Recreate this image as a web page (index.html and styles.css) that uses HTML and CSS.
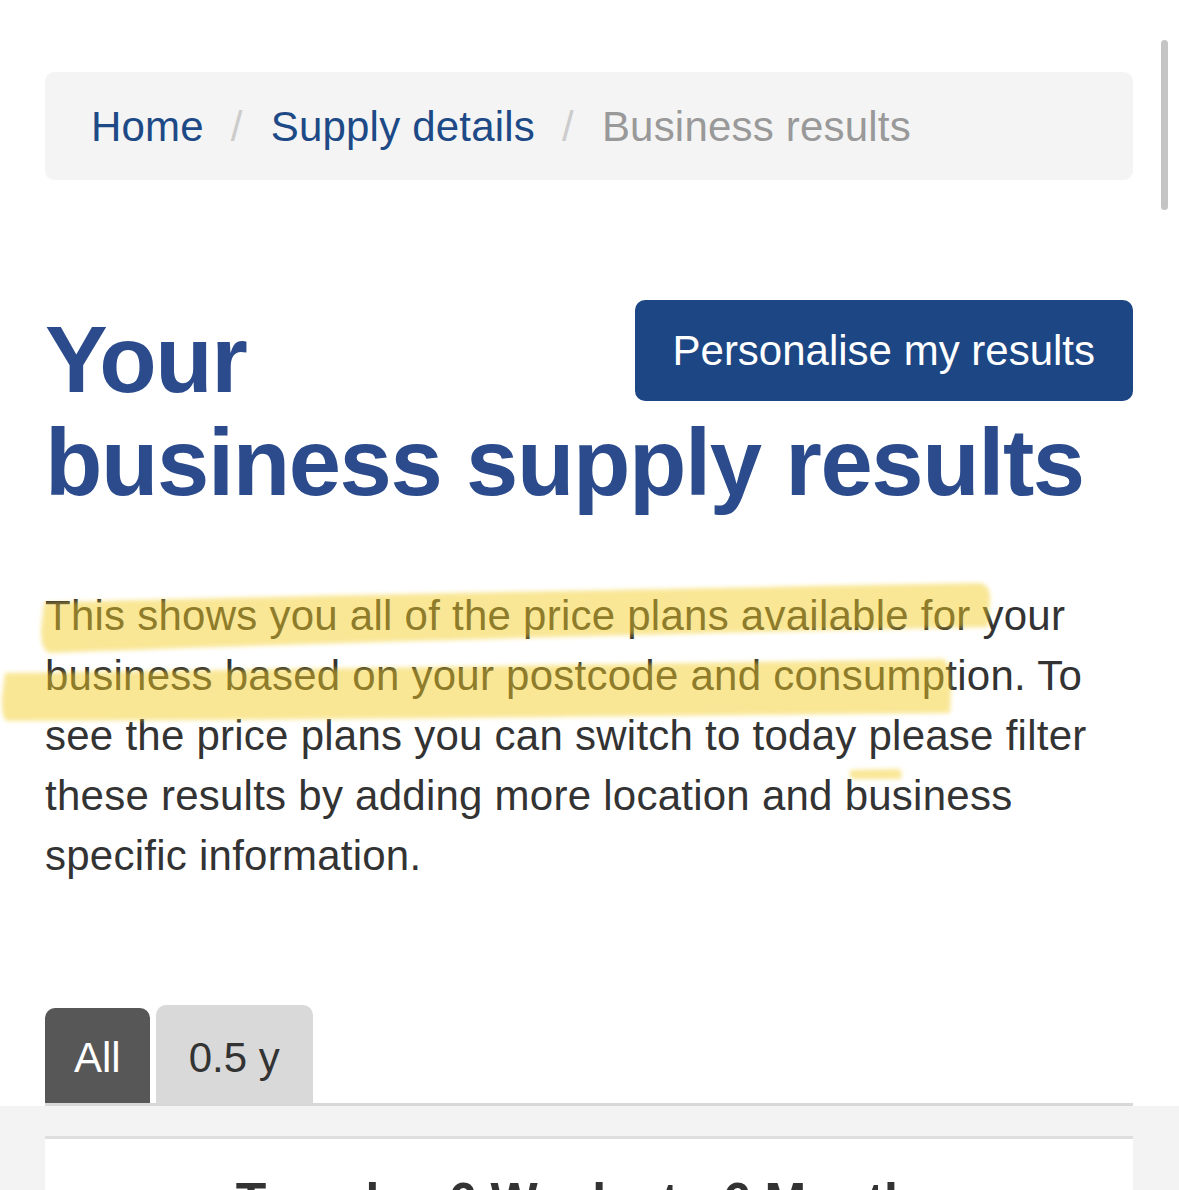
FILE: index.html
```html
<!DOCTYPE html>
<html>
<head>
    <title>Business results</title>
    <link rel="stylesheet" href="styles.css">
</head>
<body>
    <div class="scrollbar"></div>

    <svg class="marker" width="1179" height="900" viewBox="0 0 1179 900">
        <defs>
            <filter id="soft" x="-5%" y="-20%" width="110%" height="140%">
                <feGaussianBlur stdDeviation="2"/>
            </filter>
        </defs>
        <g filter="url(#soft)">
            <path d="M44,603 C220,597 600,590 980,583 Q991,585 990,601 L988,627 C700,633 300,643 50,653 Q41,651 41,630 Z"/>
            <path d="M5,673 C300,669 700,663 943,659 Q952,663 951,690 L950,713 C650,716 300,720 7,721 Q1,718 2,697 Z"/>
            <path d="M851,770 L899,769 Q904,774 900,779 L853,779 Q847,775 851,770 Z"/>
        </g>
    </svg>

    <main class="container">
        <nav class="breadcrumb">
            <a href="#">Home</a>
            <span class="sep">/</span>
            <a href="#">Supply details</a>
            <span class="sep">/</span>
            <span class="current">Business results</span>
        </nav>

        <div class="page-head">
            <a class="btn" href="#">Personalise my results</a>
            <h1>Your business supply results</h1>
        </div>

        <p class="intro">This shows you all of the price plans available for your business based on your postcode and consumption. To see the price plans you can switch to today please filter these results by adding more location and business specific information.</p>

        <ul class="tabs">
            <li class="tab tab-active">All</li>
            <li class="tab tab-muted">0.5 y</li>
        </ul>
    </main>

    <section class="results">
        <div class="container">
            <div class="card">
                <h2>Tuesday 6 Weeks to 6 Months</h2>
            </div>
        </div>
    </section>
</body>
</html>
```

FILE: styles.css
```css
html, body {
    margin: 0;
    overflow: hidden;
}

body {
    font-family: "Liberation Sans", Arial, sans-serif;
    background-color: #fff;
    color: #333;
    position: relative;
}

.container {
    padding: 0 46px 0 45px;
}

/* highlighter strokes drawn over the intro text */
.marker {
    position: absolute;
    top: 0;
    left: 0;
    z-index: 2;
    pointer-events: none;
    fill: rgba(242, 204, 32, 0.48);
}

.scrollbar {
    position: fixed;
    top: 40px;
    right: 11px;
    width: 7px;
    height: 170px;
    background-color: #c4c4c4;
    border-radius: 4px;
    z-index: 3;
}

.breadcrumb {
    display: flex;
    margin-top: 72px;
    padding: 25px 46px 23px;
    background-color: #f4f4f4;
    border-radius: 9px;
    font-size: 42px;
    line-height: 60px;
    letter-spacing: 0.2px;
}

.breadcrumb a {
    color: #1d4a86;
    text-decoration: none;
}

.breadcrumb .sep {
    color: #ccc;
    padding: 0 28px 0 27px;
}

.breadcrumb .current {
    color: #999;
}

.page-head {
    display: flow-root;
    margin-top: 120px;
}

.btn {
    float: right;
    margin-left: 20px;
    padding: 20px 38px;
    background-color: #1c4684;
    color: #fff;
    font-size: 42px;
    line-height: 61px;
    border-radius: 10px;
    text-decoration: none;
}

h1 {
    margin: 8px 0 0;
    font-size: 94px;
    line-height: 103px;
    font-weight: bold;
    letter-spacing: -1.4px;
    color: #2b4b8c;
}

.intro {
    margin: 72px 0 0;
    font-size: 42px;
    line-height: 60px;
    letter-spacing: 0.25px;
    color: #333;
}

.tabs {
    display: flex;
    align-items: flex-end;
    gap: 6px;
    margin: 119px 0 0;
    padding: 0;
    list-style: none;
    border-bottom: 3px solid #d8d8d8;
}

.tab {
    font-size: 42px;
    line-height: 60px;
    border-radius: 10px 10px 0 0;
}

.tab-active {
    padding: 20px 29px 15px;
    background-color: #575757;
    color: #fff;
}

.tab-muted {
    padding: 23px 33px 15px;
    background-color: #d9d9d9;
    color: #333;
}

.results {
    background-color: #f3f3f3;
    padding-top: 30px;
}

.card {
    background-color: #fff;
    border-top: 3px solid #dedede;
    padding-top: 32px;
    text-align: center;
}

.card h2 {
    margin: 0;
    font-size: 50px;
    line-height: 1.2;
    font-weight: bold;
    color: #333;
}
```
